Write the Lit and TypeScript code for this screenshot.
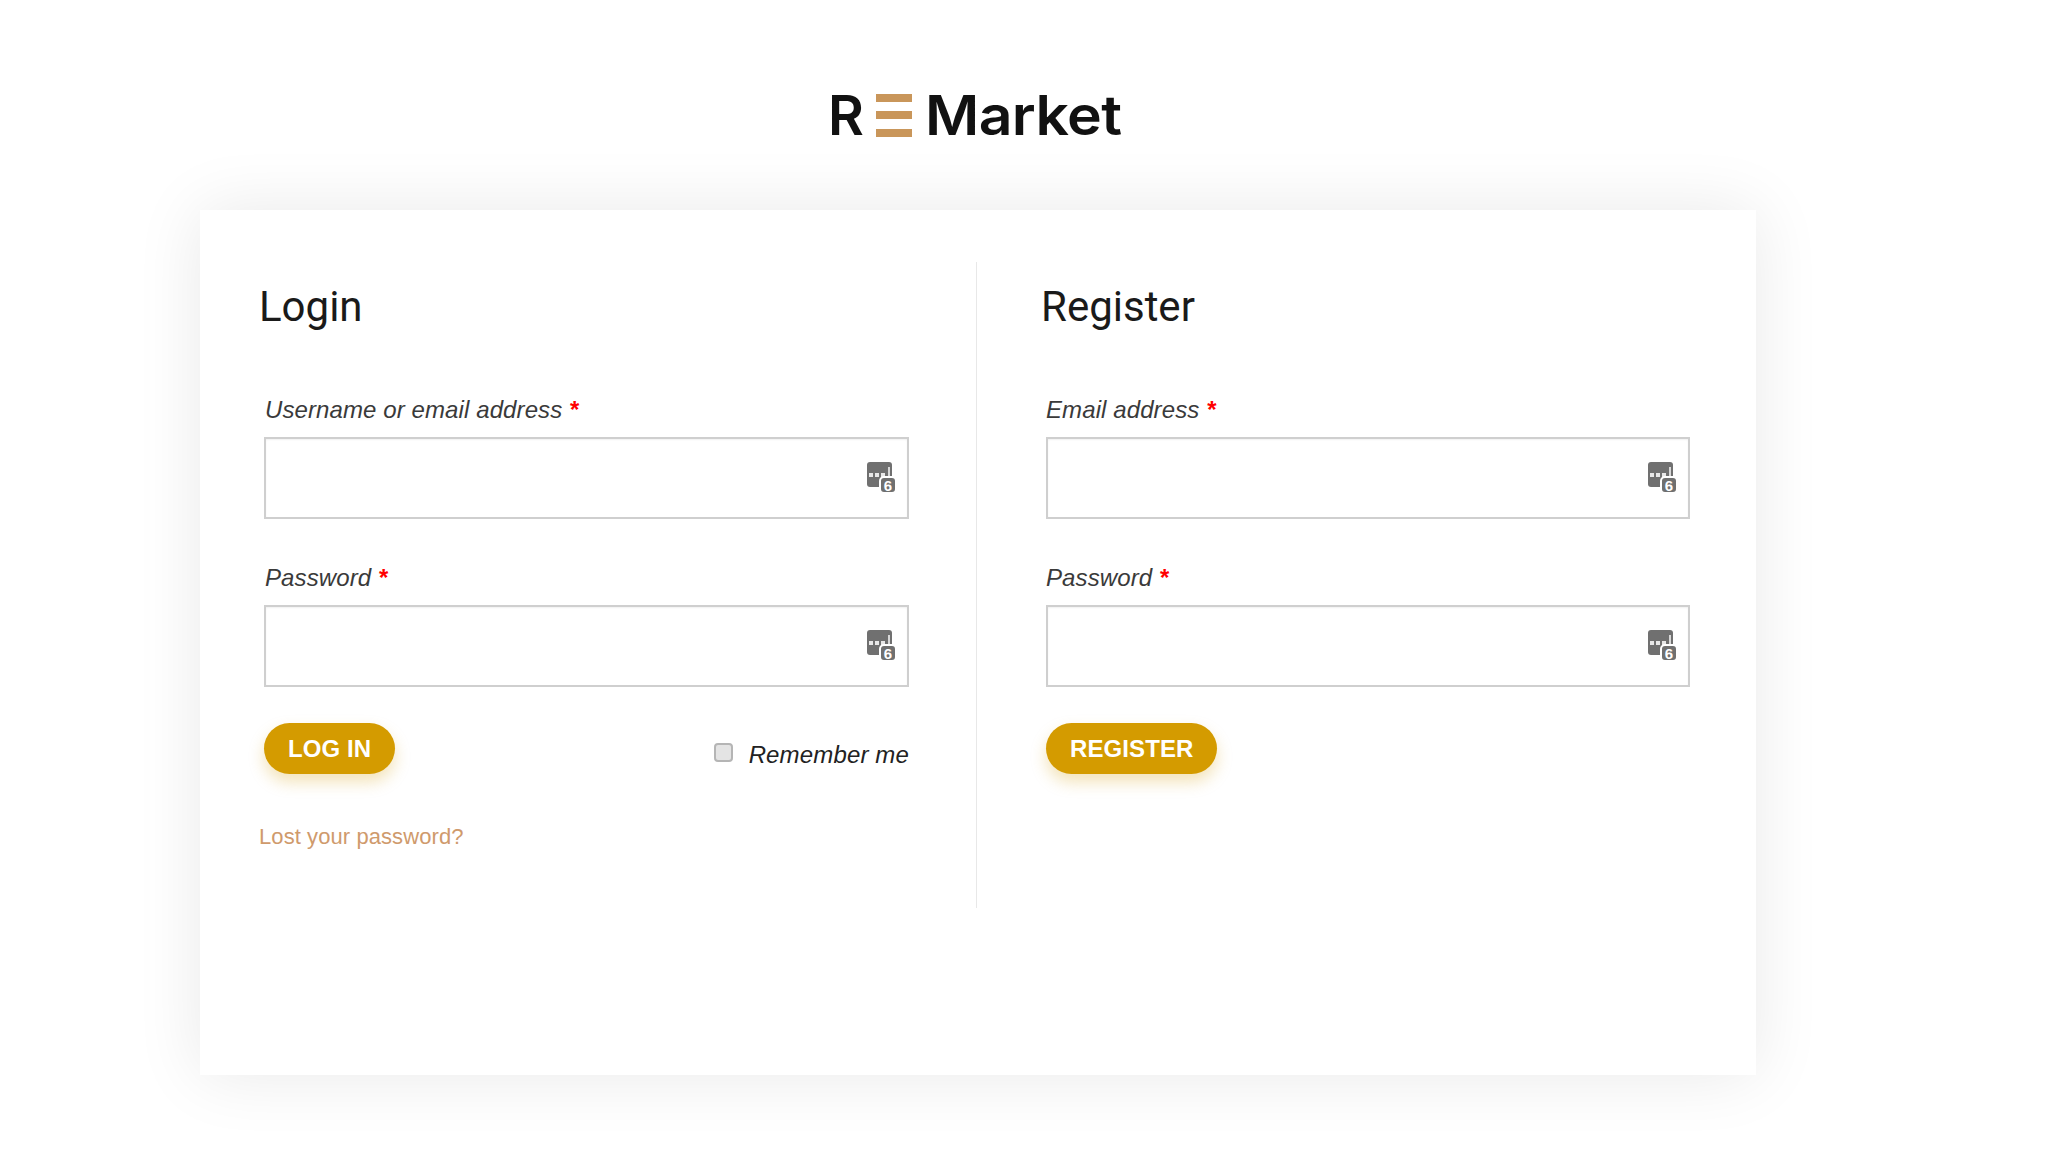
import { LitElement, html, css } from "lit";
import { customElement } from "lit/decorators.js";

@customElement("app-root")
export class AppRoot extends LitElement {
  static styles = css`
    :host { display: block; width: 2048px; height: 1169px; background: #fff; overflow: hidden; font-family: "Liberation Sans", Arial, sans-serif; }
    * { box-sizing: border-box; }
    .top { width: 1556px; margin-left: 200px; height: 210px; padding: 87px 0 0 628px; display: flex; }
    .logo { display: flex; align-items: center; height: 56px; font-family: Inter, sans-serif; font-weight: 600; font-size: 55px; line-height: 56px; color: #111; }
    .bars { width: 36px; height: 43px; margin: 0 13px 0 12px; display: flex; flex-direction: column; justify-content: space-between; }
    .bars i { display: block; height: 8px; background: #c9965a; }
    .mk { display: inline-block; width: 196px; transform: scaleX(1.07); transform-origin: left center; letter-spacing: -.6px; }
    .card { width: 1556px; height: 865px; margin-left: 200px; background: #fff; box-shadow: 0 0 64px rgba(0,0,0,.09); padding-top: 52px; display: flex; align-items: flex-start; }
    .col { height: 646px; }
    .col.left { width: 777px; border-right: 1px solid #e8e8e8; padding: 0 67px 0 60px; }
    .col.right { flex: 1; padding: 0 66px 0 65px; }
    h2 { margin: 0 0 0 -1px; font-family: Roboto, sans-serif; font-weight: 400; font-size: 42px; line-height: 50px; height: 134px; padding-top: 20px; color: #1a1a1a; }
    .field { margin-left: 4px; height: 168px; }
    label.name { display: block; font-style: italic; font-size: 24px; line-height: 28px; height: 41px; color: #3a3a3a; letter-spacing: .1px; }
    .left label.name { padding-left: 1px; }
    .req { color: #f00; font-weight: 700; font-style: italic; }
    .box { position: relative; height: 82px; }
    input.text { width: 100%; height: 100%; border: 2px solid #cfcfcf; background: #fff; outline: none; box-shadow: inset 0 1px 2px rgba(0,0,0,.06); display: block; }
    .kp { position: absolute; right: 12px; top: 24px; width: 30px; height: 34px; }
    .actions { margin-left: 4px; margin-top: -9px; display: flex; justify-content: space-between; align-items: flex-start; height: 102px; }
    .btn { height: 51px; border: 0; border-radius: 26px; background: #d49b00; color: #fff; font: 700 24px/51px "Liberation Sans", Arial, sans-serif; letter-spacing: .1px; padding: 0 24px; box-shadow: 0 8px 16px rgba(212,155,0,.28); }
    .rem { display: flex; align-items: center; margin-top: 18px; font-style: italic; font-size: 24px; line-height: 28px; color: #222; letter-spacing: .15px; }
    .cb { width: 19px; height: 19px; margin: 0 16px 6px 0; border: 2px solid #b5b5b5; border-radius: 4px; background: #e4e4e4; }
    .lost { display: block; margin: -1px 0 0 -1px; font-size: 22px; line-height: 26px; color: #cf9a6c; letter-spacing: .08px; text-decoration: none; }
  `;

  private icon() {
    return html`<svg class="kp" viewBox="0 0 30 34" aria-hidden="true">
      <rect x="0" y="1" width="25" height="25" rx="3" fill="#707070"></rect>
      <rect x="2" y="12" width="4" height="4" fill="#e8e8e8"></rect>
      <rect x="8" y="12" width="4" height="4" fill="#e8e8e8"></rect>
      <rect x="14" y="12" width="4" height="4" fill="#e8e8e8"></rect>
      <rect x="21" y="6" width="2" height="10" fill="#d8d8d8"></rect>
      <rect x="13" y="16" width="16" height="16" rx="4" fill="#707070" stroke="#fff" stroke-width="2"></rect>
      <text x="21" y="29.5" text-anchor="middle" font-family="Liberation Sans, sans-serif" font-weight="700" font-size="15" fill="#fff">6</text>
    </svg>`;
  }

  private field(label: string) {
    return html`<div class="field">
      <label class="name">${label} <span class="req">*</span></label>
      <div class="box"><input class="text" type="text" />${this.icon()}</div>
    </div>`;
  }

  render() {
    return html`
      <div class="top">
        <div class="logo"><span>R</span><span class="bars"><i></i><i></i><i></i></span><span class="mk">Market</span></div>
      </div>
      <div class="card">
        <section class="col left">
          <h2>Login</h2>
          ${this.field("Username or email address")}
          ${this.field("Password")}
          <div class="actions">
            <button class="btn">LOG IN</button>
            <label class="rem"><span class="cb"></span>Remember me</label>
          </div>
          <a class="lost" href="#">Lost your password?</a>
        </section>
        <section class="col right">
          <h2>Register</h2>
          ${this.field("Email address")}
          ${this.field("Password")}
          <div class="actions"><button class="btn">REGISTER</button></div>
        </section>
      </div>
    `;
  }
}
